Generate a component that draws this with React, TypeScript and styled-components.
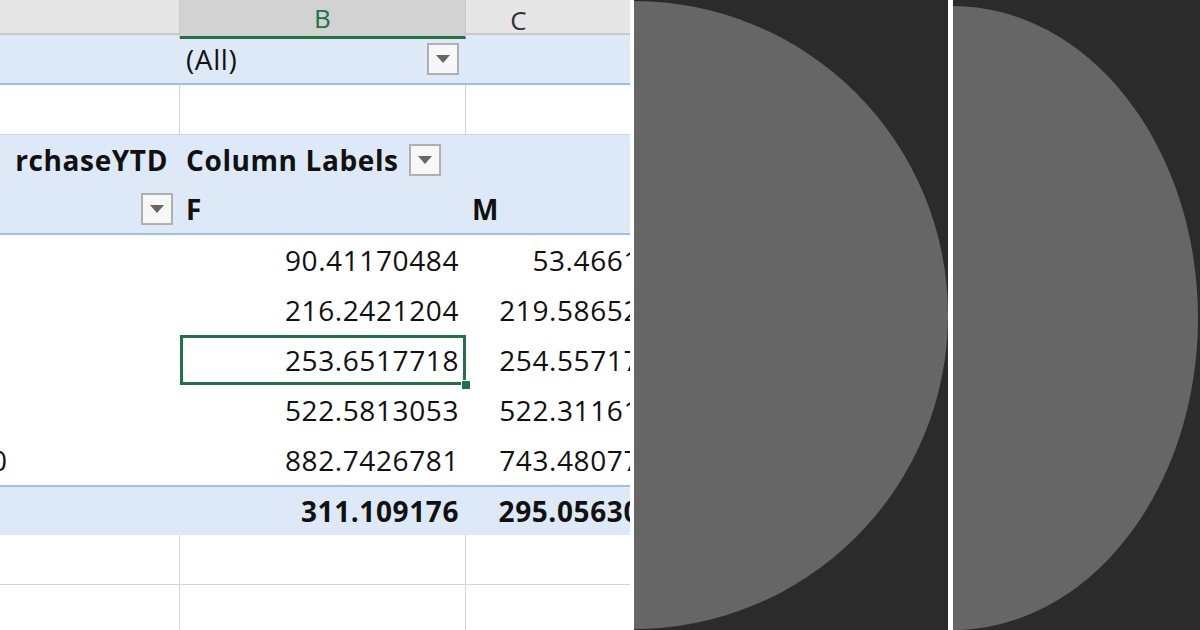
import React from 'react';
import styled, { createGlobalStyle } from 'styled-components';

const Global = createGlobalStyle`
    body { margin: 0; background: #fff; }
`;

const Page = styled.div`
    display: flex;
    width: 1200px;
    height: 630px;
    overflow: hidden;
    background: #fff;
`;

const Sheet = styled.div`
    width: 630px;
    flex-shrink: 0;
    overflow: hidden;
    font-family: "Open Sans", "Liberation Sans", sans-serif;
    color: #111;
`;

const HeaderRow = styled.div`
    display: grid;
    grid-template-columns: 180px 286px 200px;
    height: 35px;
    background: #e6e6e6;
    border-bottom: 2px solid #c8c8c8;
    box-sizing: border-box;
`;

const ColHead = styled.div<{ selected?: boolean }>`
    display: flex;
    align-items: center;
    justify-content: center;
    padding-right: ${(p) => (p.selected ? '0' : '94px')};
    font-size: 26px;
    color: ${(p) => (p.selected ? '#217346' : '#333')};
    background: ${(p) => (p.selected ? '#d2d2d2' : 'transparent')};
    border-right: 1px solid #c8c8c8;
    border-bottom: ${(p) => (p.selected ? '3px solid #217346' : 'none')};
    &:first-child { padding-right: 0; }
`;

const Row = styled.div<{ tint?: boolean; line?: 'top' | 'bottom'; grid?: boolean }>`
    display: grid;
    grid-template-columns: 180px 286px 200px;
    height: 50px;
    box-sizing: border-box;
    background: ${(p) => (p.tint ? '#dde9f6' : '#fff')};
    border-bottom: ${(p) =>
        p.line === 'bottom' ? '2px solid #9bc2e6' : p.grid ? '1px solid #d4d4d4' : 'none'};
    border-top: ${(p) => (p.line === 'top' ? '2px solid #9bc2e6' : 'none')};
`;

const Cell = styled.div<{ align?: 'left' | 'right'; bold?: boolean; grid?: boolean; sel?: boolean }>`
    position: relative;
    display: flex;
    align-items: center;
    justify-content: ${(p) => (p.align === 'right' ? 'flex-end' : 'space-between')};
    padding: 0 7px 0 6px;
    font-size: 28px;
    letter-spacing: 0.6px;
    font-weight: ${(p) => (p.bold ? 700 : 400)};
    white-space: nowrap;
    overflow: visible;
    border-right: ${(p) => (p.grid ? '1px solid #d4d4d4' : 'none')};
    box-sizing: border-box;
    ${(p) => (p.sel ? 'outline: 3px solid #217346; outline-offset: -3px;' : '')}
`;

const CutCell = styled(Cell)`
    justify-content: flex-end;
    overflow: hidden;
    padding-right: 12px;
`;

const EdgeCell = styled(Cell)`
    justify-content: flex-start;
    padding-left: 0;
    margin-left: -9px;
`;

const Handle = styled.span`
    position: absolute;
    right: -5px;
    bottom: -5px;
    width: 8px;
    height: 8px;
    background: #217346;
    border: 1px solid #fff;
`;

const Drop = styled.span<{ push?: boolean }>`
    display: inline-flex;
    align-items: center;
    justify-content: center;
    width: 32px;
    height: 32px;
    flex-shrink: 0;
    background: #f7f7f7;
    border: 2px solid #b0b0b0;
    box-sizing: border-box;
    margin-left: 10px;
    margin-right: ${(p) => (p.push ? 'auto' : '0')};
    &::after {
        content: '';
        border-left: 7px solid transparent;
        border-right: 7px solid transparent;
        border-top: 8px solid #666;
    }
`;

const Panel = styled.div<{ w: number }>`
    width: ${(p) => p.w}px;
    height: 630px;
    flex-shrink: 0;
    background: #2b2b2b;
`;

const Gap = styled.div<{ w: number }>`
    width: ${(p) => p.w}px;
    flex-shrink: 0;
    background: #fff;
`;

const data: [string, string, string][] = [
    ['', '90.41170484', '53.4661'],
    ['', '216.2421204', '219.58652'],
    ['', '253.6517718', '254.55717'],
    ['', '522.5813053', '522.31161'],
    ['0', '882.7426781', '743.48077'],
];

export default function App() {
    return (
        <Page>
            <Global />
            <Sheet>
                <HeaderRow>
                    <ColHead />
                    <ColHead selected>B</ColHead>
                    <ColHead>C</ColHead>
                </HeaderRow>
                <Row tint line="bottom">
                    <Cell />
                    <Cell>(All)<Drop /></Cell>
                    <Cell />
                </Row>
                <Row grid>
                    <Cell grid />
                    <Cell grid />
                    <Cell />
                </Row>
                <Row tint>
                    <CutCell bold>rchaseYTD</CutCell>
                    <Cell bold>Column Labels<Drop push /></Cell>
                    <Cell />
                </Row>
                <Row tint line="bottom">
                    <Cell align="right"><Drop /></Cell>
                    <Cell bold>F</Cell>
                    <Cell bold>M</Cell>
                </Row>
                {data.map(([a, b, c], i) => (
                    <Row key={i}>
                        <EdgeCell>{a}</EdgeCell>
                        <Cell align="right" sel={i === 2}>
                            {b}
                            {i === 2 && <Handle />}
                        </Cell>
                        <Cell align="right" style={{ paddingRight: 0, marginRight: 26 }}>{c}</Cell>
                    </Row>
                ))}
                <Row tint line="top">
                    <Cell />
                    <Cell align="right" bold>311.109176</Cell>
                    <Cell align="right" bold style={{ paddingRight: 0, marginRight: 26 }}>295.05630</Cell>
                </Row>
                <Row grid>
                    <Cell grid />
                    <Cell grid />
                    <Cell />
                </Row>
                <Row grid>
                    <Cell grid />
                    <Cell grid />
                    <Cell />
                </Row>
            </Sheet>
            <Gap w={4} />
            <Panel w={314}>
                <svg width="314" height="630">
                    <circle cx="0" cy="315" r="314" fill="#666" />
                </svg>
            </Panel>
            <Gap w={5} />
            <Panel w={247}>
                <svg width="247" height="630">
                    <ellipse cx="0" cy="318" rx="245" ry="312" fill="#666" />
                </svg>
            </Panel>
        </Page>
    );
}
